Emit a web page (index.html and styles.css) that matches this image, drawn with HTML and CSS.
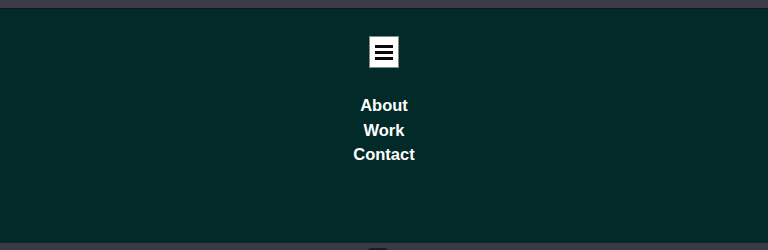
FILE: index.html
```html
<!DOCTYPE html>
<html lang="en">
<head>
<meta charset="utf-8">
<title>Menu</title>
<link rel="stylesheet" href="styles.css">
</head>
<body>
<div class="topbar"></div>
<main class="panel">
  <button class="burger" aria-label="Menu">
    <span class="bar"></span>
    <span class="bar"></span>
    <span class="bar"></span>
  </button>
  <nav class="nav">
    <a href="#">About</a>
    <a href="#">Work</a>
    <a href="#">Contact</a>
  </nav>
</main>
<div class="bottombar"><span class="handle"></span></div>
</body>
</html>
```

FILE: styles.css
```css
html, body {
  margin: 0;
  padding: 0;
  height: 250px;
  overflow: hidden;
  background: #022a28;
  font-family: "Liberation Sans", Arial, sans-serif;
}
.topbar {
  height: 8px;
  background: #3b3a46;
  border-bottom: 1px solid #16171b;
}
.panel {
  height: 234px;
  background: #022a28;
  display: flex;
  flex-direction: column;
  align-items: center;
  padding-top: 27px;
  box-sizing: border-box;
}
.burger {
  width: 30px;
  height: 32px;
  margin: 0 0 0 -1px;
  padding: 0;
  background: #ffffff;
  border: 1px solid #7f8c8a;
  display: flex;
  flex-direction: column;
  align-items: center;
  justify-content: center;
  gap: 3px;
  cursor: pointer;
}
.bar {
  display: block;
  width: 18px;
  height: 3px;
  background: #0a0a0a;
}
.nav {
  margin-top: 25px;
  display: flex;
  flex-direction: column;
  align-items: center;
}
.nav a {
  color: #ffffff;
  text-decoration: none;
  font-weight: bold;
  font-size: 16.5px;
  line-height: 24.5px;
}
.bottombar {
  height: 8px;
  background: #3a3a46;
  position: relative;
}
.handle {
  position: absolute;
  left: 368px;
  bottom: 0;
  width: 20px;
  height: 3px;
  background: #1c1c22;
  border-radius: 3px 3px 0 0;
}
```
